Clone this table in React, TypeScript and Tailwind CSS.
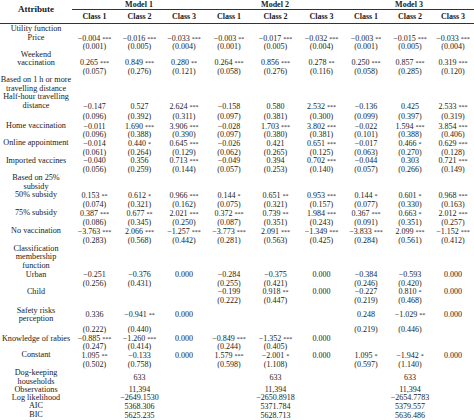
type Cell = string | null;

interface Row {
  h: string;
  label?: string[];
  vals?: Cell[];
}

const cols =
  'grid grid-cols-[72px_45px_45px_44px_46px_47px_45px_44px_44px_42px]';

const _ = null;

const rows: Row[] = [
  { h: 'h-[10px]', label: ['Utility function'] },
  {
    h: 'h-[9px]',
    label: ['Price'],
    vals: ['−0.004 ***', '−0.016 ***', '−0.033 ***', '−0.003 **', '−0.017 ***', '−0.032 ***', '−0.003 **', '−0.015 ***', '−0.033 ***'],
  },
  { h: 'h-[8px]', vals: ['(0.001)', '(0.005)', '(0.004)', '(0.001)', '(0.005)', '(0.004)', '(0.001)', '(0.005)', '(0.004)'] },
  { h: 'h-[8px]', label: ['Weekend'] },
  {
    h: 'h-[8px]',
    label: ['vaccination'],
    vals: ['0.265 ***', '0.849 ***', '0.280 **', '0.264 ***', '0.856 ***', '0.278 **', '0.250 ***', '0.857 ***', '0.319 ***'],
  },
  { h: 'h-[9px]', vals: ['(0.057)', '(0.276)', '(0.121)', '(0.058)', '(0.276)', '(0.116)', '(0.058)', '(0.285)', '(0.120)'] },
  { h: 'h-[9px]', label: ['Based on 1 h or more'] },
  { h: 'h-[8px]', label: ['travelling distance'] },
  { h: 'h-[8px]', label: ['Half-hour travelling'] },
  {
    h: 'h-[11px]',
    label: ['distance'],
    vals: ['−0.147', '0.527', '2.624 ***', '−0.158', '0.580', '2.532 ***', '−0.136', '0.425', '2.533 ***'],
  },
  { h: 'h-[10px]', vals: ['(0.096)', '(0.392)', '(0.311)', '(0.097)', '(0.381)', '(0.300)', '(0.099)', '(0.397)', '(0.319)'] },
  {
    h: 'h-[9px]',
    label: ['Home vaccination'],
    vals: ['−0.011', '1.690 ***', '3.906 ***', '−0.028', '1.703 ***', '3.802 ***', '−0.022', '1.594 ***', '3.854 ***'],
  },
  { h: 'h-[8px]', vals: ['(0.096)', '(0.388)', '(0.390)', '(0.097)', '(0.380)', '(0.381)', '(0.101)', '(0.388)', '(0.406)'] },
  {
    h: 'h-[9px]',
    label: ['Online appointment'],
    vals: ['−0.014', '0.440 *', '0.645 ***', '−0.026', '0.421', '0.651 ***', '−0.017', '0.466 *', '0.629 ***'],
  },
  { h: 'h-[9px]', vals: ['(0.061)', '(0.264)', '(0.129)', '(0.062)', '(0.265)', '(0.125)', '(0.063)', '(0.270)', '(0.128)'] },
  {
    h: 'h-[8px]',
    label: ['Imported vaccines'],
    vals: ['−0.040', '0.356', '0.713 ***', '−0.049', '0.394', '0.702 ***', '−0.044', '0.303', '0.721 ***'],
  },
  { h: 'h-[9px]', vals: ['(0.056)', '(0.259)', '(0.144)', '(0.057)', '(0.253)', '(0.140)', '(0.057)', '(0.266)', '(0.149)'] },
  { h: 'h-[9px]', label: ['Based on 25%'] },
  { h: 'h-[8px]', label: ['subsidy'] },
  {
    h: 'h-[9px]',
    label: ['50% subsidy'],
    vals: ['0.153 **', '0.612 *', '0.966 ***', '0.144 *', '0.651 **', '0.953 ***', '0.144 *', '0.601 *', '0.968 ***'],
  },
  { h: 'h-[9px]', vals: ['(0.074)', '(0.321)', '(0.162)', '(0.075)', '(0.321)', '(0.157)', '(0.077)', '(0.330)', '(0.163)'] },
  {
    h: 'h-[9px]',
    label: ['75% subsidy'],
    vals: ['0.387 ***', '0.677 **', '2.021 ***', '0.372 ***', '0.739 **', '1.984 ***', '0.367 ***', '0.663 *', '2.012 ***'],
  },
  { h: 'h-[9px]', vals: ['(0.086)', '(0.345)', '(0.250)', '(0.087)', '(0.351)', '(0.243)', '(0.091)', '(0.351)', '(0.257)'] },
  {
    h: 'h-[9px]',
    label: ['No vaccination'],
    vals: ['−3.763 ***', '2.066 ***', '−1.257 ***', '−3.773 ***', '2.091 ***', '−1.349 ***', '−3.833 ***', '2.099 ***', '−1.152 ***'],
  },
  { h: 'h-[9px]', vals: ['(0.283)', '(0.568)', '(0.442)', '(0.281)', '(0.563)', '(0.425)', '(0.284)', '(0.561)', '(0.412)'] },
  { h: 'h-[8px]', label: ['Classification'] },
  { h: 'h-[9px]', label: ['membership'] },
  { h: 'h-[9px]', label: ['function'] },
  {
    h: 'h-[8px]',
    label: ['Urban'],
    vals: ['−0.251', '−0.376', '0.000', '−0.284', '−0.375', '0.000', '−0.384', '−0.593', '0.000'],
  },
  { h: 'h-[9px]', vals: ['(0.256)', '(0.431)', _, '(0.255)', '(0.421)', _, '(0.246)', '(0.420)', _] },
  {
    h: 'h-[8px]',
    label: ['Child'],
    vals: [_, _, _, '−0.199', '0.918 **', '0.000', '−0.227', '0.810 *', '0.000'],
  },
  { h: 'h-[9px]', vals: [_, _, _, '(0.222)', '(0.447)', _, '(0.219)', '(0.468)', _] },
  {
    h: 'h-[20px]',
    label: ['Safety risks', 'perception'],
    vals: ['0.336', '−0.941 **', '0.000', _, _, _, '0.248', '−1.029 **', '0.000'],
  },
  { h: 'h-[10px]', vals: ['(0.222)', '(0.440)', _, _, _, _, '(0.219)', '(0.446)', _] },
  {
    h: 'h-[8px]',
    label: ['Knowledge of rabies'],
    vals: ['−0.885 ***', '−1.260 ***', '0.000', '−0.849 ***', '−1.352 ***', '0.000', _, _, _],
  },
  { h: 'h-[8px]', vals: ['(0.247)', '(0.414)', _, '(0.244)', '(0.405)', _, _, _, _] },
  {
    h: 'h-[9px]',
    label: ['Constant'],
    vals: ['1.095 **', '−0.133', '0.000', '1.579 ***', '−2.001 *', '0.000', '1.095 *', '−1.942 *', '0.000'],
  },
  { h: 'h-[9px]', vals: ['(0.502)', '(0.758)', _, '(0.598)', '(1.108)', _, '(0.597)', '(1.140)', _] },
  { h: 'h-[17px]', label: ['Dog-keeping', 'households'], vals: [_, '633', _, _, '633', _, _, '633', _] },
  { h: 'h-[8px]', label: ['Observations'], vals: [_, '11,394', _, _, '11,394', _, _, '11,394', _] },
  { h: 'h-[8px]', label: ['Log likelihood'], vals: [_, '−2649.1530', _, _, '−2650.8918', _, _, '−2654.7783', _] },
  { h: 'h-[9px]', label: ['AIC'], vals: [_, '5368.306', _, _, '5371.784', _, _, '5379.557', _] },
  { h: 'h-[9px]', label: ['BIC'], vals: [_, '5625.235', _, _, '5628.713', _, _, '5636.486', _] },
];

function Val({ v }: { v: Cell }) {
  if (!v) return <div />;
  const [num, stars] = v.split(' ');
  return (
    <div className="text-center whitespace-nowrap leading-none">
      {num}
      {stars && <span className="ml-[2px] text-[6px]">{stars}</span>}
    </div>
  );
}

export default function App() {
  return (
    <div className="w-[474px] h-[420px] overflow-hidden bg-white text-[#1a1a1a] font-['Liberation_Serif',serif]">
      {/* header */}
      <div className={`${cols} border-b border-[#333]`}>
        <div className="row-span-2 flex items-center justify-center pb-[3px] text-[9px] font-bold">
          Attribute
        </div>
        {['Model 1', 'Model 2', 'Model 3'].map((m) => (
          <div
            key={m}
            className="col-span-3 h-[10px] flex items-center justify-center border-b border-[#333] text-[8px] font-bold leading-none"
          >
            {m}
          </div>
        ))}
        {[1, 2, 3, 1, 2, 3, 1, 2, 3].map((c, i) => (
          <div key={i} className="h-[13px] flex items-center justify-center text-[8px] font-bold leading-none">
            Class {c}
          </div>
        ))}
      </div>

      {/* body */}
      {rows.map((r, i) => (
        <div key={i} className={`${cols} items-center text-[8px] ${r.h}`}>
          <div className="flex flex-col items-center text-center text-[8.2px] leading-[9px] whitespace-nowrap">
            {r.label?.map((l) => <span key={l} className="leading-none">{l}</span>)}
          </div>
          {(r.vals ?? Array(9).fill(null)).map((v, j) => (
            <Val key={j} v={v} />
          ))}
        </div>
      ))}
    </div>
  );
}
